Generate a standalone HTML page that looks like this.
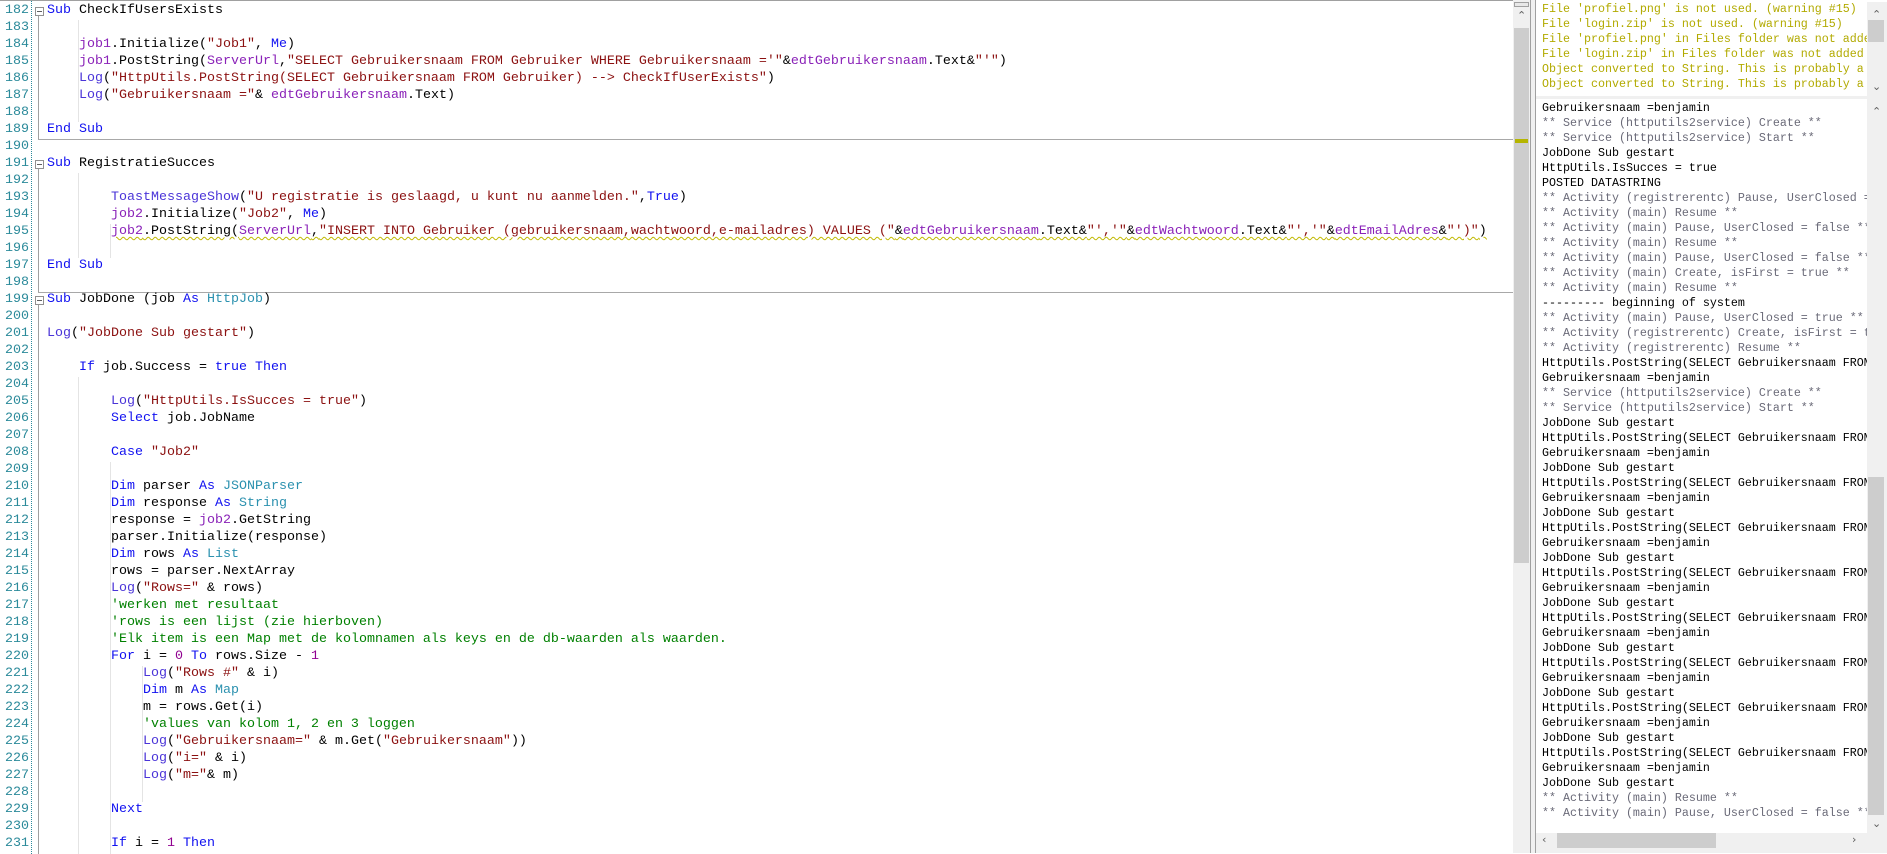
<!DOCTYPE html>
<html><head><meta charset="utf-8"><style>
html,body{margin:0;padding:0;width:1887px;height:853px;overflow:hidden;background:#fff;}
#ed{position:absolute;left:0;top:0;width:1513px;height:853px;background:#fff;border-top:1px solid #a0a0a0;box-sizing:border-box;}
.ln{position:absolute;left:0;width:29px;text-align:right;font:13.33px "Liberation Mono",monospace;color:#2b8a9a;}
.cl{position:absolute;left:47px;white-space:pre;font:13.33px "Liberation Mono",monospace;color:#000;}
.row{position:absolute;left:0;height:17px;line-height:17px;width:1513px;}
.k{color:#1010f0}.t{color:#2b91af}.i{color:#8a22b8}.l{color:#4a34d8}.s{color:#8b1010}.c{color:#008000}.n{color:#900090}
.gut{position:absolute;left:31px;top:0;height:853px;border-left:1px dotted #2b8a9a;}
.fold{position:absolute;left:35px;width:7px;height:7px;border:1px solid #909090;background:#fff;box-sizing:content-box;}
.fold:after{content:"";position:absolute;left:1px;top:3px;width:5px;height:1px;background:#606060;}
.vl{position:absolute;width:1px;background:#a0a0a0;left:38px;}
.hl{position:absolute;height:1px;background:#a8a8a8;left:38px;width:1475px;}
.ig{position:absolute;width:1px;background:#e4e4e4;}
.wv{text-decoration:underline wavy #c0b800;text-decoration-thickness:1px;text-underline-offset:2px;}
#sb{position:absolute;left:1513px;top:0;width:17px;height:853px;background:#f0f0f0;}
#sep{position:absolute;left:1530px;top:0;width:6px;height:853px;background:#f0f0f0;border-left:1px solid #a0a0a0;border-right:1px solid #a0a0a0;box-sizing:border-box;}
.lg{position:absolute;left:1536px;width:331px;background:#fff;overflow:hidden;}
.lg div{white-space:pre;font:11.67px "Liberation Mono",monospace;height:15px;line-height:15px;padding-left:6px;}
.w{color:#b2aa00}.g{color:#6a6a78}.b{color:#000}
.vs{position:absolute;left:1867px;width:20px;background:#f0f0f0;}
.ar{position:absolute;font:11px "DejaVu Sans",sans-serif;color:#606060;}
</style></head><body>
<div id="ed">
<div class="gut"></div>
<div class="fold" style="top:6px"></div><div class="vl" style="top:15px;height:123px"></div><div class="hl" style="top:138px"></div>
<div class="fold" style="top:159px"></div><div class="vl" style="top:168px;height:123px"></div><div class="hl" style="top:291px"></div>
<div class="fold" style="top:295px"></div><div class="vl" style="top:304px;height:549px"></div>
<div class="ig" style="left:78px;top:19px;height:102px"></div>
<div class="ig" style="left:78px;top:172px;height:85px"></div><div class="ig" style="left:110px;top:223px;height:34px"></div>
<div class="ig" style="left:78px;top:376px;height:477px"></div><div class="ig" style="left:110px;top:461px;height:392px"></div>
<div class="ig" style="left:142px;top:665px;height:136px"></div>
<div class="row" style="top:2px"><span class="ln">182</span><span class="cl"><span class="k">Sub</span> CheckIfUsersExists</span></div>
<div class="row" style="top:19px"><span class="ln">183</span></div>
<div class="row" style="top:36px"><span class="ln">184</span><span class="cl">    <span class="i">job1</span>.Initialize(<span class="s">"Job1"</span>, <span class="k">Me</span>)</span></div>
<div class="row" style="top:53px"><span class="ln">185</span><span class="cl">    <span class="i">job1</span>.PostString(<span class="i">ServerUrl</span>,<span class="s">"SELECT Gebruikersnaam FROM Gebruiker WHERE Gebruikersnaam ='"</span>&amp;<span class="i">edtGebruikersnaam</span>.Text&amp;<span class="s">"'"</span>)</span></div>
<div class="row" style="top:70px"><span class="ln">186</span><span class="cl">    <span class="l">Log</span>(<span class="s">"HttpUtils.PostString(SELECT Gebruikersnaam FROM Gebruiker) --&gt; CheckIfUserExists"</span>)</span></div>
<div class="row" style="top:87px"><span class="ln">187</span><span class="cl">    <span class="l">Log</span>(<span class="s">"Gebruikersnaam ="</span>&amp; <span class="i">edtGebruikersnaam</span>.Text)</span></div>
<div class="row" style="top:104px"><span class="ln">188</span></div>
<div class="row" style="top:121px"><span class="ln">189</span><span class="cl"><span class="k">End Sub</span></span></div>
<div class="row" style="top:138px"><span class="ln">190</span></div>
<div class="row" style="top:155px"><span class="ln">191</span><span class="cl"><span class="k">Sub</span> RegistratieSucces</span></div>
<div class="row" style="top:172px"><span class="ln">192</span></div>
<div class="row" style="top:189px"><span class="ln">193</span><span class="cl">        <span class="l">ToastMessageShow</span>(<span class="s">"U registratie is geslaagd, u kunt nu aanmelden."</span>,<span class="k">True</span>)</span></div>
<div class="row" style="top:206px"><span class="ln">194</span><span class="cl">        <span class="i">job2</span>.Initialize(<span class="s">"Job2"</span>, <span class="k">Me</span>)</span></div>
<div class="row" style="top:223px"><span class="ln">195</span><span class="cl">        <span class="wv"><span class="i">job2</span>.PostString(<span class="i">ServerUrl</span>,<span class="s">"INSERT INTO Gebruiker (gebruikersnaam,wachtwoord,e-mailadres) VALUES ("</span>&amp;<span class="i">edtGebruikersnaam</span>.Text&amp;<span class="s">"','"</span>&amp;<span class="i">edtWachtwoord</span>.Text&amp;<span class="s">"','"</span>&amp;<span class="i">edtEmailAdres</span>&amp;<span class="s">"')"</span>)</span></span></div>
<div class="row" style="top:240px"><span class="ln">196</span></div>
<div class="row" style="top:257px"><span class="ln">197</span><span class="cl"><span class="k">End Sub</span></span></div>
<div class="row" style="top:274px"><span class="ln">198</span></div>
<div class="row" style="top:291px"><span class="ln">199</span><span class="cl"><span class="k">Sub</span> JobDone (job <span class="k">As</span> <span class="t">HttpJob</span>)</span></div>
<div class="row" style="top:308px"><span class="ln">200</span></div>
<div class="row" style="top:325px"><span class="ln">201</span><span class="cl"><span class="l">Log</span>(<span class="s">"JobDone Sub gestart"</span>)</span></div>
<div class="row" style="top:342px"><span class="ln">202</span></div>
<div class="row" style="top:359px"><span class="ln">203</span><span class="cl">    <span class="k">If</span> job.Success = <span class="k">true</span> <span class="k">Then</span></span></div>
<div class="row" style="top:376px"><span class="ln">204</span></div>
<div class="row" style="top:393px"><span class="ln">205</span><span class="cl">        <span class="l">Log</span>(<span class="s">"HttpUtils.IsSucces = true"</span>)</span></div>
<div class="row" style="top:410px"><span class="ln">206</span><span class="cl">        <span class="k">Select</span> job.JobName</span></div>
<div class="row" style="top:427px"><span class="ln">207</span></div>
<div class="row" style="top:444px"><span class="ln">208</span><span class="cl">        <span class="k">Case</span> <span class="s">"Job2"</span></span></div>
<div class="row" style="top:461px"><span class="ln">209</span></div>
<div class="row" style="top:478px"><span class="ln">210</span><span class="cl">        <span class="k">Dim</span> parser <span class="k">As</span> <span class="t">JSONParser</span></span></div>
<div class="row" style="top:495px"><span class="ln">211</span><span class="cl">        <span class="k">Dim</span> response <span class="k">As</span> <span class="t">String</span></span></div>
<div class="row" style="top:512px"><span class="ln">212</span><span class="cl">        response = <span class="i">job2</span>.GetString</span></div>
<div class="row" style="top:529px"><span class="ln">213</span><span class="cl">        parser.Initialize(response)</span></div>
<div class="row" style="top:546px"><span class="ln">214</span><span class="cl">        <span class="k">Dim</span> rows <span class="k">As</span> <span class="t">List</span></span></div>
<div class="row" style="top:563px"><span class="ln">215</span><span class="cl">        rows = parser.NextArray</span></div>
<div class="row" style="top:580px"><span class="ln">216</span><span class="cl">        <span class="l">Log</span>(<span class="s">"Rows="</span> &amp; rows)</span></div>
<div class="row" style="top:597px"><span class="ln">217</span><span class="cl">        <span class="c">'werken met resultaat</span></span></div>
<div class="row" style="top:614px"><span class="ln">218</span><span class="cl">        <span class="c">'rows is een lijst (zie hierboven)</span></span></div>
<div class="row" style="top:631px"><span class="ln">219</span><span class="cl">        <span class="c">'Elk item is een Map met de kolomnamen als keys en de db-waarden als waarden.</span></span></div>
<div class="row" style="top:648px"><span class="ln">220</span><span class="cl">        <span class="k">For</span> i = <span class="n">0</span> <span class="k">To</span> rows.Size - <span class="n">1</span></span></div>
<div class="row" style="top:665px"><span class="ln">221</span><span class="cl">            <span class="l">Log</span>(<span class="s">"Rows #"</span> &amp; i)</span></div>
<div class="row" style="top:682px"><span class="ln">222</span><span class="cl">            <span class="k">Dim</span> m <span class="k">As</span> <span class="t">Map</span></span></div>
<div class="row" style="top:699px"><span class="ln">223</span><span class="cl">            m = rows.Get(i)</span></div>
<div class="row" style="top:716px"><span class="ln">224</span><span class="cl">            <span class="c">'values van kolom 1, 2 en 3 loggen</span></span></div>
<div class="row" style="top:733px"><span class="ln">225</span><span class="cl">            <span class="l">Log</span>(<span class="s">"Gebruikersnaam="</span> &amp; m.Get(<span class="s">"Gebruikersnaam"</span>))</span></div>
<div class="row" style="top:750px"><span class="ln">226</span><span class="cl">            <span class="l">Log</span>(<span class="s">"i="</span> &amp; i)</span></div>
<div class="row" style="top:767px"><span class="ln">227</span><span class="cl">            <span class="l">Log</span>(<span class="s">"m="</span>&amp; m)</span></div>
<div class="row" style="top:784px"><span class="ln">228</span></div>
<div class="row" style="top:801px"><span class="ln">229</span><span class="cl">        <span class="k">Next</span></span></div>
<div class="row" style="top:818px"><span class="ln">230</span></div>
<div class="row" style="top:835px"><span class="ln">231</span><span class="cl">        <span class="k">If</span> i = <span class="n">1</span> <span class="k">Then</span></span></div>
</div>
<div id="sb">
<div style="position:absolute;left:1px;top:2px;width:15px;height:5px;background:#e8e8e8;border:1px solid #a0a0a0;box-sizing:border-box"></div>
<div class="ar" style="left:4px;top:9px">&#x2303;</div>
<div style="position:absolute;left:1px;top:28px;width:15px;height:535px;background:#cdcdcd"></div>
<div style="position:absolute;left:2px;top:139px;width:13px;height:4px;background:#b5b500"></div>
</div>
<div id="sep"></div>
<div class="lg" style="top:2px;height:94px">
<div class="w">File 'profiel.png' is not used. (warning #15)</div>
<div class="w">File 'login.zip' is not used. (warning #15)</div>
<div class="w">File 'profiel.png' in Files folder was not added</div>
<div class="w">File 'login.zip' in Files folder was not added</div>
<div class="w">Object converted to String. This is probably a</div>
<div class="w">Object converted to String. This is probably a</div>
</div>
<div style="position:absolute;left:1536px;top:96px;width:351px;height:3px;background:#f0f0f0"></div>
<div class="vs" style="top:2px;height:94px"><div style="position:absolute;left:1px;top:18px;width:16px;height:22px;background:#cdcdcd"></div><div class="ar" style="left:5px;top:6px">&#x2303;</div><div class="ar" style="left:5px;top:78px">&#x2304;</div></div>
<div class="lg" style="top:99px;height:734px;padding-top:2px;box-sizing:border-box">
<div class="b">Gebruikersnaam =benjamin</div>
<div class="g">** Service (httputils2service) Create **</div>
<div class="g">** Service (httputils2service) Start **</div>
<div class="b">JobDone Sub gestart</div>
<div class="b">HttpUtils.IsSucces = true</div>
<div class="b">POSTED DATASTRING</div>
<div class="g">** Activity (registrerentc) Pause, UserClosed = false **</div>
<div class="g">** Activity (main) Resume **</div>
<div class="g">** Activity (main) Pause, UserClosed = false **</div>
<div class="g">** Activity (main) Resume **</div>
<div class="g">** Activity (main) Pause, UserClosed = false **</div>
<div class="g">** Activity (main) Create, isFirst = true **</div>
<div class="g">** Activity (main) Resume **</div>
<div class="b">--------- beginning of system</div>
<div class="g">** Activity (main) Pause, UserClosed = true **</div>
<div class="g">** Activity (registrerentc) Create, isFirst = true **</div>
<div class="g">** Activity (registrerentc) Resume **</div>
<div class="b">HttpUtils.PostString(SELECT Gebruikersnaam FROM</div>
<div class="b">Gebruikersnaam =benjamin</div>
<div class="g">** Service (httputils2service) Create **</div>
<div class="g">** Service (httputils2service) Start **</div>
<div class="b">JobDone Sub gestart</div>
<div class="b">HttpUtils.PostString(SELECT Gebruikersnaam FROM</div>
<div class="b">Gebruikersnaam =benjamin</div>
<div class="b">JobDone Sub gestart</div>
<div class="b">HttpUtils.PostString(SELECT Gebruikersnaam FROM</div>
<div class="b">Gebruikersnaam =benjamin</div>
<div class="b">JobDone Sub gestart</div>
<div class="b">HttpUtils.PostString(SELECT Gebruikersnaam FROM</div>
<div class="b">Gebruikersnaam =benjamin</div>
<div class="b">JobDone Sub gestart</div>
<div class="b">HttpUtils.PostString(SELECT Gebruikersnaam FROM</div>
<div class="b">Gebruikersnaam =benjamin</div>
<div class="b">JobDone Sub gestart</div>
<div class="b">HttpUtils.PostString(SELECT Gebruikersnaam FROM</div>
<div class="b">Gebruikersnaam =benjamin</div>
<div class="b">JobDone Sub gestart</div>
<div class="b">HttpUtils.PostString(SELECT Gebruikersnaam FROM</div>
<div class="b">Gebruikersnaam =benjamin</div>
<div class="b">JobDone Sub gestart</div>
<div class="b">HttpUtils.PostString(SELECT Gebruikersnaam FROM</div>
<div class="b">Gebruikersnaam =benjamin</div>
<div class="b">JobDone Sub gestart</div>
<div class="b">HttpUtils.PostString(SELECT Gebruikersnaam FROM</div>
<div class="b">Gebruikersnaam =benjamin</div>
<div class="b">JobDone Sub gestart</div>
<div class="g">** Activity (main) Resume **</div>
<div class="g">** Activity (main) Pause, UserClosed = false **</div>
</div>
<div class="vs" style="top:99px;height:734px"><div style="position:absolute;left:1px;top:378px;width:16px;height:338px;background:#cdcdcd"></div><div class="ar" style="left:5px;top:6px">&#x2303;</div><div class="ar" style="left:5px;top:718px">&#x2304;</div></div>
<div style="position:absolute;left:1536px;top:833px;width:351px;height:20px;background:#f0f0f0">
<div style="position:absolute;left:21px;top:0;width:159px;height:15px;background:#cdcdcd"></div>
<div class="ar" style="left:6px;top:0px">&#x2039;</div><div class="ar" style="left:316px;top:0px">&#x203A;</div>
</div>
</body></html>
